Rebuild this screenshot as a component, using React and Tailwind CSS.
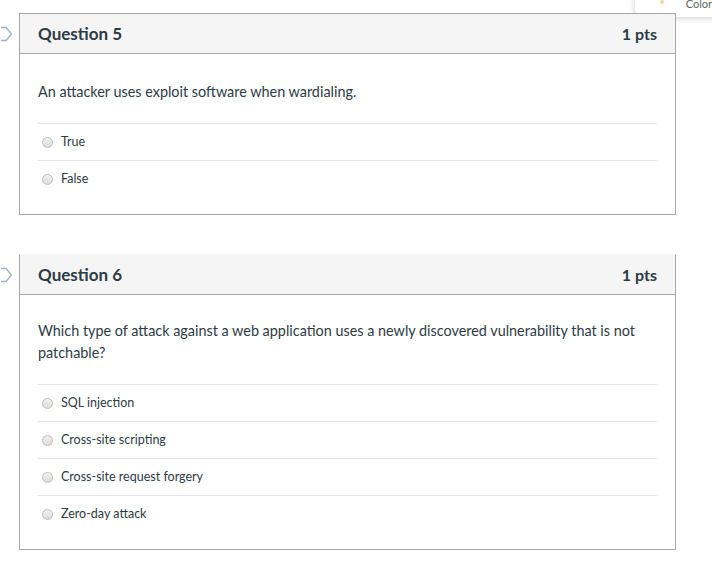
import React from "react";

const questions = [
  {
    id: 5,
    points: "1 pts",
    text: "An attacker uses exploit software when wardialing.",
    answers: ["True", "False"],
  },
  {
    id: 6,
    points: "1 pts",
    text: "Which type of attack against a web application uses a newly discovered vulnerability that is not patchable?",
    answers: [
      "SQL injection",
      "Cross-site scripting",
      "Cross-site request forgery",
      "Zero-day attack",
    ],
  },
];

const Marker = () => (
  <svg
    className="absolute -left-[19px] top-[12px]"
    width="12"
    height="16"
    viewBox="0 0 12 16"
  >
    <path
      d="M-4 1.5 H5 L10.5 8 L5 14.5 H-4"
      fill="none"
      stroke="#9db3c4"
      strokeWidth="1.3"
    />
  </svg>
);

const Radio = () => (
  <span className="inline-block w-[11px] h-[11px] rounded-full border border-[#bdbdbd] bg-gradient-to-b from-[#f2f2f2] to-[#dcdcdc]" />
);

const QuestionCard = ({ question, first }) => (
  <div
    className={`relative border border-[#a8a8a8] ${first ? "" : "border-t-[#f5f5f5]"}`}
  >
    <Marker />
    <div className="flex items-center justify-between h-[40px] px-[18px] bg-[#f5f5f5] border-b border-[#a8a8a8]">
      <h2 className="text-[17px] font-bold text-[#2d3b45]">
        Question {question.id}
      </h2>
      <span className="text-[16px] font-bold text-[#2d3b45]">
        {question.points}
      </span>
    </div>
    <div className={`px-[18px] pb-[17px] ${first ? "pt-[27px]" : "pt-[25px]"}`}>
      <p className="text-[14.4px] leading-[22px] text-[#2d3b45] pr-4">
        {question.text}
      </p>
      <div className="mt-[20px]">
        {question.answers.map((answer) => (
          <div
            key={answer}
            className="flex items-center h-[37px] border-t border-[#e3e3e3] pl-[4px]"
          >
            <Radio />
            <span className="ml-[8px] text-[12.5px] text-[#2d3b45]">
              {answer}
            </span>
          </div>
        ))}
      </div>
    </div>
  </div>
);

export default function App() {
  return (
    <div
      className="relative min-h-[577px] bg-white overflow-hidden"
      style={{ fontFamily: "Lato, 'Open Sans', sans-serif" }}
    >
      <div className="absolute right-[-20px] -top-[14px] w-[97px] h-[31px] bg-white rounded-bl-[8px] shadow-[0_1px_6px_rgba(0,0,0,0.2)] flex items-start justify-end pr-[20px] pt-[10px]">
        <span className="w-[4px] h-[4px] rounded-full bg-[#e8d9a8] mr-[22px] mt-[4px]" />
        <span className="text-[11px] leading-[16px] text-[#666]">Color</span>
      </div>
      <div className="ml-[19px] w-[657px] pt-[13px] flex flex-col gap-[39px]">
        {questions.map((q, i) => (
          <QuestionCard key={q.id} question={q} first={i === 0} />
        ))}
      </div>
    </div>
  );
}
